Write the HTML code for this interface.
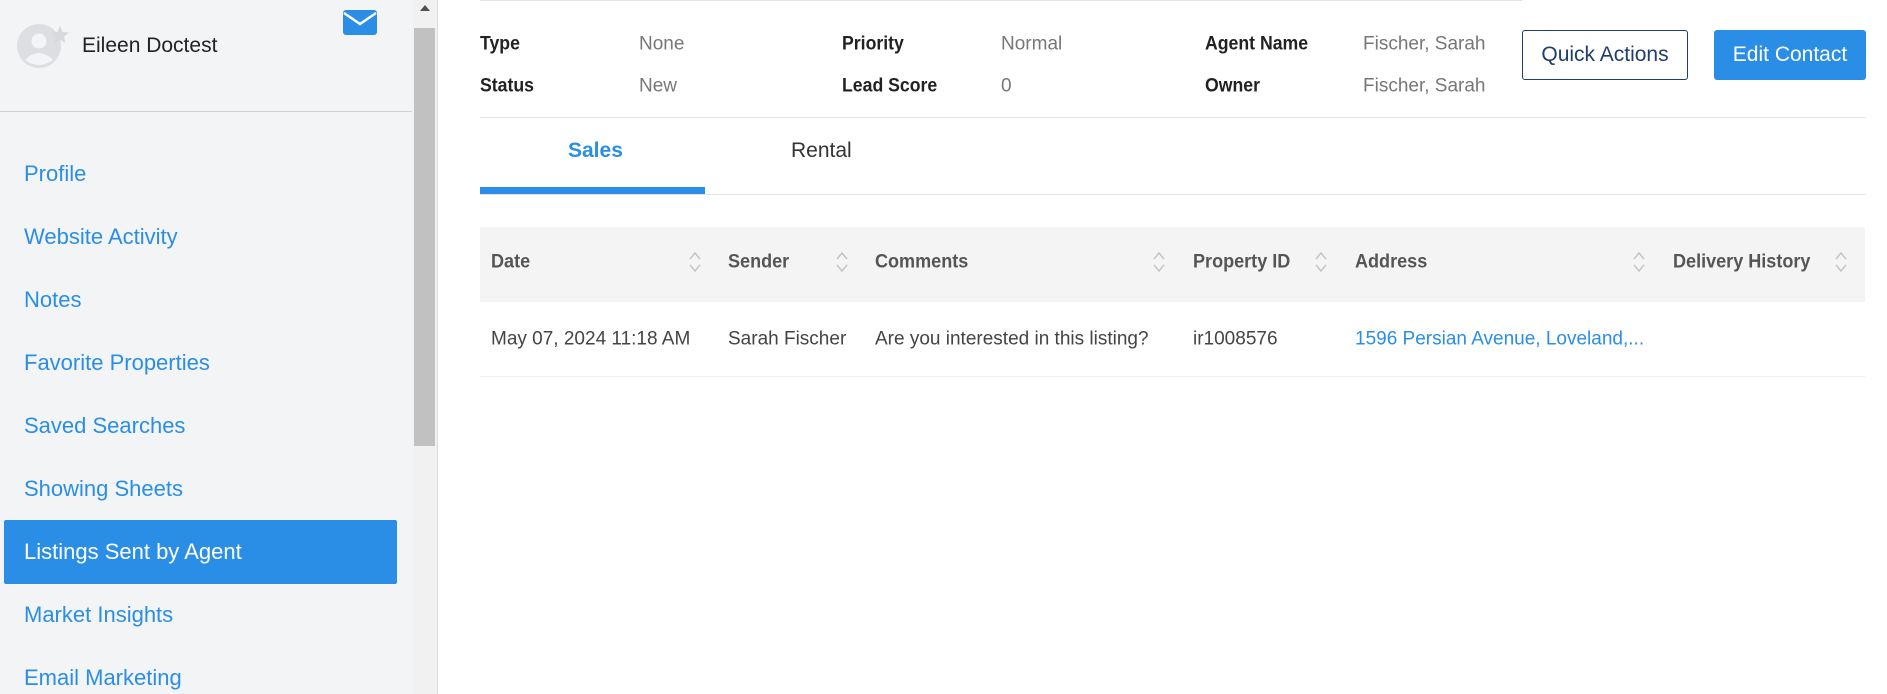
<!DOCTYPE html>
<html><head><meta charset="utf-8"><style>
*{margin:0;padding:0;box-sizing:border-box}
body{width:1887px;height:694px;overflow:hidden;background:#fff;font-family:"Liberation Sans",sans-serif;position:relative}
.a{position:absolute;white-space:nowrap;line-height:1;transform-origin:left center}
#side{position:absolute;left:0;top:0;width:413px;height:694px;background:#f3f4f6}
.nav{position:absolute;left:24px;font-size:22px;color:#2a8ee6;transform:translateY(-50%)}
.lab{font-size:19px;color:#222;font-weight:bold;transform:translateY(-50%) scaleX(.93)}
.val{font-size:19px;color:#777;transform:translateY(-50%)}
.th{font-size:19px;color:#555;font-weight:bold;top:262px;transform:translateY(-50%) scaleX(.95)}
.td{font-size:19px;color:#444;top:339px;transform:translateY(-50%)}
.si{position:absolute;top:250px;width:14px;height:24px}
</style></head><body>
<div id="side">
  <svg style="position:absolute;left:17px;top:24px" width="54" height="46" viewBox="0 0 54 46">
    <circle cx="22" cy="22" r="22" fill="#dcdee2"/>
    <circle cx="22" cy="17" r="7.5" fill="#f3f4f6"/>
    <path d="M8 36 Q22 22 36 36 Q22 46 8 36Z" fill="#f3f4f6"/>
    <path d="M43 2 L45.5 8 L52 8.5 L47 12.5 L48.5 19 L43 15.5 L37.5 19 L39 12.5 L34 8.5 L40.5 8Z" fill="#d6d8dc"/>
  </svg>
  <div class="a" style="left:82px;top:35px;font-size:21px;color:#222">Eileen Doctest</div>
  <svg style="position:absolute;left:343px;top:10px" width="34" height="25" viewBox="0 0 34 25">
    <rect width="34" height="25" rx="3" fill="#2a8ee6"/>
    <path d="M1 3 L17 14 L33 3" stroke="#fff" stroke-width="2.5" fill="none"/>
  </svg>
  <div style="position:absolute;left:0;top:111px;width:412px;height:1px;background:#cfd1d4"></div>
  <div style="position:absolute;left:4px;top:520px;width:393px;height:64px;background:#2a8ee6;border-radius:2px"></div>
  <div class="nav" style="top:174px">Profile</div>
  <div class="nav" style="top:237px">Website Activity</div>
  <div class="nav" style="top:300px">Notes</div>
  <div class="nav" style="top:363px">Favorite Properties</div>
  <div class="nav" style="top:426px">Saved Searches</div>
  <div class="nav" style="top:489px">Showing Sheets</div>
  <div class="nav" style="top:552px;color:#fff">Listings Sent by Agent</div>
  <div class="nav" style="top:615px">Market Insights</div>
  <div class="nav" style="top:678px">Email Marketing</div>
</div>
<div style="position:absolute;left:413px;top:0;width:24px;height:694px;background:#f1f1f1"></div>
<div style="position:absolute;left:414px;top:28px;width:21px;height:418px;background:#c1c1c1"></div>
<svg style="position:absolute;left:418px;top:3px" width="14" height="10"><path d="M2 8 L7 2 L12 8Z" fill="#505050"/></svg>
<div style="position:absolute;left:437px;top:0;width:1px;height:694px;background:#ddd"></div>

<div style="position:absolute;left:480px;top:0;width:1042px;height:1px;background:#e3e3e3"></div>
<div class="a lab" style="left:480px;top:44px">Type</div>
<div class="a val" style="left:639px;top:44px">None</div>
<div class="a lab" style="left:842px;top:44px">Priority</div>
<div class="a val" style="left:1001px;top:44px">Normal</div>
<div class="a lab" style="left:1205px;top:44px">Agent Name</div>
<div class="a val" style="left:1363px;top:44px">Fischer, Sarah</div>
<div class="a lab" style="left:480px;top:86px">Status</div>
<div class="a val" style="left:639px;top:86px">New</div>
<div class="a lab" style="left:842px;top:86px">Lead Score</div>
<div class="a val" style="left:1001px;top:86px">0</div>
<div class="a lab" style="left:1205px;top:86px">Owner</div>
<div class="a val" style="left:1363px;top:86px">Fischer, Sarah</div>
<div style="position:absolute;left:1522px;top:30px;width:166px;height:50px;border:1px solid #1e3f6e;border-radius:3px;color:#1e3f6e;font-size:21px;line-height:48px;text-align:center">Quick Actions</div>
<div style="position:absolute;left:1714px;top:30px;width:152px;height:50px;background:#2a8ee6;border-radius:3px;color:#fff;font-size:21px;line-height:50px;text-align:center">Edit Contact</div>
<div style="position:absolute;left:480px;top:117px;width:1386px;height:1px;background:#e6e6e6"></div>
<div class="a" style="left:568px;top:140px;font-size:21px;color:#2a8ee6;font-weight:bold">Sales</div>
<div class="a" style="left:791px;top:140px;font-size:21px;color:#333">Rental</div>
<div style="position:absolute;left:480px;top:194px;width:1386px;height:1px;background:#e6e6e6"></div>
<div style="position:absolute;left:480px;top:187px;width:225px;height:7px;background:#2a8ee6"></div>

<div style="position:absolute;left:480px;top:227px;width:1385px;height:75px;background:#f4f4f4"></div>
<div style="position:absolute;left:480px;top:376px;width:1385px;height:1px;background:#eee"></div>
<div class="a th" style="left:491px">Date</div>
<div class="a th" style="left:728px">Sender</div>
<div class="a th" style="left:875px">Comments</div>
<div class="a th" style="left:1193px">Property ID</div>
<div class="a th" style="left:1355px">Address</div>
<div class="a th" style="left:1673px">Delivery History</div>
<svg class="si" style="left:688px" viewBox="0 0 14 24"><path d="M2 9 L7 3 L12 9 M2 15 L7 21 L12 15" stroke="#c4c4c4" stroke-width="1.5" fill="none"/></svg>
<svg class="si" style="left:835px" viewBox="0 0 14 24"><path d="M2 9 L7 3 L12 9 M2 15 L7 21 L12 15" stroke="#c4c4c4" stroke-width="1.5" fill="none"/></svg>
<svg class="si" style="left:1152px" viewBox="0 0 14 24"><path d="M2 9 L7 3 L12 9 M2 15 L7 21 L12 15" stroke="#c4c4c4" stroke-width="1.5" fill="none"/></svg>
<svg class="si" style="left:1314px" viewBox="0 0 14 24"><path d="M2 9 L7 3 L12 9 M2 15 L7 21 L12 15" stroke="#c4c4c4" stroke-width="1.5" fill="none"/></svg>
<svg class="si" style="left:1632px" viewBox="0 0 14 24"><path d="M2 9 L7 3 L12 9 M2 15 L7 21 L12 15" stroke="#c4c4c4" stroke-width="1.5" fill="none"/></svg>
<svg class="si" style="left:1834px" viewBox="0 0 14 24"><path d="M2 9 L7 3 L12 9 M2 15 L7 21 L12 15" stroke="#c4c4c4" stroke-width="1.5" fill="none"/></svg>
<div class="a td" style="left:491px">May 07, 2024 11:18 AM</div>
<div class="a td" style="left:728px">Sarah Fischer</div>
<div class="a td" style="left:875px">Are you interested in this listing?</div>
<div class="a td" style="left:1193px">ir1008576</div>
<div class="a td" style="left:1355px;color:#2a8ee6">1596 Persian Avenue, Loveland,...</div>
</body></html>
